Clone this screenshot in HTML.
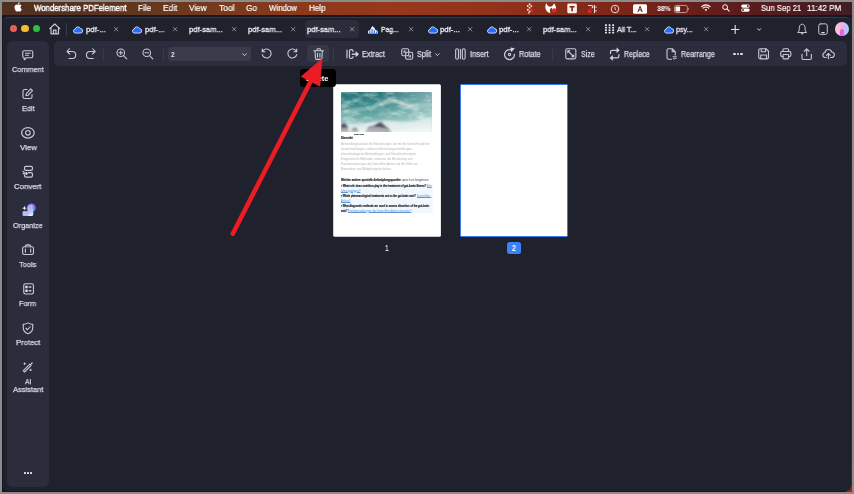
<!DOCTYPE html>
<html lang="en">
<head>
<meta charset="utf-8">
<title>Wondershare PDFelement</title>
<style>
*{box-sizing:border-box;margin:0;padding:0}
html,body{width:854px;height:494px;overflow:hidden;background:#8c8c8c;font-family:"Liberation Sans",sans-serif}
body{position:relative}
.a{position:absolute}
.t{position:absolute;will-change:transform;transform-origin:0 50%;height:12px;line-height:12px;white-space:nowrap}
svg{position:absolute;display:block;overflow:visible}
.ic{fill:none;stroke:#c8cad6;stroke-width:1.1;stroke-linecap:round;stroke-linejoin:round}
#screen{left:2px;top:1.5px;width:850px;height:490.5px;background:#151826;overflow:hidden}
#menubar{left:2px;top:1.5px;width:850px;height:13.2px;background:linear-gradient(90deg,#50301f 0%,#55311f 8%,#63361e 16%,#763a1c 25%,#8c3a1a 36%,#96391a 46%,#93341a 56%,#8c2e18 64%,#7d2518 73%,#671e1a 82%,#561b1e 90%,#481c22 96%,#421d25 100%)}
#win{left:2.8px;top:16.6px;width:848.4px;height:474.9px;background:#1f212d;border-radius:5px;border-top:1px solid #353848}
#side{left:7px;top:41px;width:42.2px;height:446px;background:#2b2d3c;border-radius:6px}
#tool{left:53.7px;top:40.8px;width:793.3px;height:25.6px;background:#2b2d3c;border-radius:5px}
.sep{position:absolute;top:47.5px;width:1px;height:13px;background:#383a49}
.x{position:absolute;width:5px;height:5px}

</style>
</head>
<body>
<div class="a" id="screen"></div>
<div class="a" id="menubar"></div>
<svg style="left:13.700px;top:2.300px" width="8" height="10.600" viewBox="0 0 15 19"><path fill="#fff" d="M10.600 0c.1 1-.3 2-1 2.800-.7.800-1.700 1.300-2.600 1.200-.1-1 .4-2 1-2.700C8.700.6 9.800.1 10.600 0zM14 6.500c-.1.100-1.800 1-1.800 3.100 0 2.500 2.200 3.300 2.300 3.400 0 .1-.4 1.200-1.100 2.400-.7 1-1.400 2-2.600 2-1.100 0-1.400-.7-2.700-.7-1.200 0-1.600.7-2.700.7-1.100 0-1.800-.9-2.600-2.100C1.800 14 1 11.500 1 9.200 1 5.900 3.100 4.200 5.200 4.200c1.100 0 2 .7 2.700.7.700 0 1.700-.8 3-.8.500 0 2.200.1 3.100 2.400z"/></svg>
<svg style="left:0;top:0" width="600" height="16" viewBox="0 0 600 16"><g fill="#f6e4de"><circle cx="529.600" cy="4.300" r=".95"/><circle cx="527.800" cy="6" r=".95"/><circle cx="531.300" cy="6" r=".95"/><circle cx="529.600" cy="7.800" r=".95"/><circle cx="527.800" cy="9.700" r=".95"/><circle cx="529.600" cy="11.500" r=".95"/><circle cx="528.800" cy="13" r=".8"/></g><circle cx="531.600" cy="10.200" r="1.500" fill="#ee2430"/><path d="M546.200 3.200C544.500 6.500 545.300 11 549 12.800L550.600 12.800C549.400 10.600 549.800 8.800 551.200 7.800 552.100 8.500 552.600 9.500 552.600 10.600L556 10C556.400 7.600 555.600 5.200 554 3.200 553.400 5 552.200 6.200 550.600 6.800 548.600 6.400 547 5.200 546.200 3.200z" fill="#fff"/><circle cx="554.300" cy="10.400" r="2.200" fill="#e8232d"/><rect x="567.300" y="3.600" width="9.600" height="9.700" rx="1.400" fill="#fbeeea"/><path d="M569.600 5.900h5v1.600h-1.700v3.800h-1.600V7.500h-1.700z" fill="#7a2616"/></svg>
<svg style="left:587.0px;top:3.5px" width="10" height="10" viewBox="0 0 10 10"><path d="M1 1.500h3.500c2 0 2 2.500 0 2.500M7.500 1v8M9 2.500v1.200M9 6v1.500" fill="none" stroke="#f3dcd6" stroke-width="1.100"/><rect x=".8" y="5.500" width="3.600" height="3.600" fill="#d62a26"/></svg>
<svg style="left:610.0px;top:3.5px" width="10" height="10" viewBox="0 0 10 10"><circle cx="5" cy="5" r="3.800" fill="none" stroke="#f0d9d2" stroke-width="1"/><path d="M5 2.800V5.200L6.200 6" fill="none" stroke="#f0d9d2" stroke-width=".9"/></svg>
<svg style="left:635.0px;top:3.5px" width="10" height="10" viewBox="0 0 10 10"><rect x="-2" y=".2" width="14" height="9.600" rx="1.500" fill="#fff"/><path d="M2.400 8 4.600 2h.9l2.200 6H6.500L6 6.600H4L3.500 8zM4.300 5.600h1.400L5 3.600z" fill="#6d2418"/></svg>
<svg style="left:674px;top:4.5px" width="16" height="8" viewBox="0 0 16 8"><rect x=".4" y=".4" width="13" height="7.200" rx="2" fill="none" stroke="#d9b5ae" stroke-width=".8"/><rect x="1.500" y="1.500" width="4.600" height="5" rx="1" fill="#fff"/><path d="M14.300 2.600c1 .3 1 2.500 0 2.800z" fill="#d9b5ae"/></svg>
<svg style="left:701.200px;top:4.400px" width="9.800" height="7.400" viewBox="0 0 12 9"><path d="M.8 3.200a7.400 7.400 0 0 1 10.400 0M2.600 5.100a4.800 4.800 0 0 1 6.800 0" fill="none" stroke="#fff" stroke-width="1.300" stroke-linecap="round"/><path d="M4.400 6.900a2.300 2.300 0 0 1 3.200 0L6 8.600z" fill="#fff"/></svg>
<svg style="left:722.300px;top:4.400px" width="7.800" height="7.800" viewBox="0 0 9 9"><circle cx="3.600" cy="3.600" r="2.800" fill="none" stroke="#fff" stroke-width="1.100"/><path d="M5.700 5.700 8.300 8.300" stroke="#fff" stroke-width="1.200" stroke-linecap="round"/></svg>
<svg style="left:741.400px;top:4.300px" width="8.800" height="8.200" viewBox="0 0 10 9"><rect x=".2" y=".3" width="9.600" height="3.700" rx="1.800" fill="#fff"/><circle cx="7.700" cy="2.150" r="1.100" fill="#7a2418"/><rect x=".2" y="4.900" width="9.600" height="3.700" rx="1.800" fill="#fff"/><circle cx="2.300" cy="6.750" r="1.100" fill="#7a2418"/></svg>
<div class="a" style="left:850.600px;top:15px;width:1.400px;height:477px;background:linear-gradient(#3a1a22,#4a1a18 60%,#6a1a10)"></div>
<div class="a" style="left:846px;top:486px;width:6px;height:6px;background:#b01c08"></div>
<div class="a" id="win"></div>
<div class="a" style="left:9.65px;top:24.90px;width:7.400px;height:7.400px;border-radius:50%;background:#ee5f58"></div>
<div class="a" style="left:21.40px;top:24.90px;width:7.400px;height:7.400px;border-radius:50%;background:#f6b92f"></div>
<div class="a" style="left:33.00px;top:24.90px;width:7.400px;height:7.400px;border-radius:50%;background:#2cc03f"></div>
<div class="a" style="left:12.5px;top:27.700px;width:1.700px;height:1.700px;border-radius:50%;background:#b3131a"></div>
<svg style="left:49.4px;top:23.2px" width="11.500" height="11.500" viewBox="0 0 23 23"><path class="ic" style="stroke-width:2.400" d="M1.400 11.200 11.500 2 21.600 11.200M4 9.200V21.600h15V9.200M9 21.600V14.200h5v7.400"/></svg>
<div class="a" style="left:66px;top:22.5px;width:1px;height:13.500px;background:#393b49"></div>
<div class="a" style="left:304.9px;top:19.7px;width:53.800px;height:18.700px;border-radius:4px;background:#2b2d3a"></div>
<svg style="left:73.4px;top:25.6px" width="9.600" height="7.600" viewBox="0 0 19 15"><path d="M5 14a4 4 0 0 1-.6-7.950A5.500 5.500 0 0 1 14.800 5 4.500 4.500 0 0 1 14.500 14z" fill="#256cf8" stroke="#e8ecff" stroke-width="1.700"/></svg>
<svg style="left:132.3px;top:25.6px" width="9.600" height="7.600" viewBox="0 0 19 15"><path d="M5 14a4 4 0 0 1-.6-7.950A5.500 5.500 0 0 1 14.800 5 4.500 4.500 0 0 1 14.500 14z" fill="#256cf8" stroke="#e8ecff" stroke-width="1.700"/></svg>
<svg style="left:427.6px;top:25.6px" width="9.600" height="7.600" viewBox="0 0 19 15"><path d="M5 14a4 4 0 0 1-.6-7.950A5.500 5.500 0 0 1 14.800 5 4.500 4.500 0 0 1 14.500 14z" fill="#256cf8" stroke="#e8ecff" stroke-width="1.700"/></svg>
<svg style="left:486.5px;top:25.6px" width="9.600" height="7.600" viewBox="0 0 19 15"><path d="M5 14a4 4 0 0 1-.6-7.950A5.500 5.500 0 0 1 14.800 5 4.500 4.500 0 0 1 14.500 14z" fill="#256cf8" stroke="#e8ecff" stroke-width="1.700"/></svg>
<svg style="left:663.7px;top:25.6px" width="9.600" height="7.600" viewBox="0 0 19 15"><path d="M5 14a4 4 0 0 1-.6-7.950A5.500 5.500 0 0 1 14.800 5 4.500 4.500 0 0 1 14.500 14z" fill="#256cf8" stroke="#e8ecff" stroke-width="1.700"/></svg>
<svg style="left:113.7px;top:27.4px" width="4.400" height="4.400" viewBox="0 0 10 10"><path d="M1 1 9 9M9 1 1 9" stroke="#a9abb9" stroke-width="1.700" stroke-linecap="round"/></svg>
<svg style="left:172.8px;top:27.4px" width="4.400" height="4.400" viewBox="0 0 10 10"><path d="M1 1 9 9M9 1 1 9" stroke="#a9abb9" stroke-width="1.700" stroke-linecap="round"/></svg>
<svg style="left:231.6px;top:27.4px" width="4.400" height="4.400" viewBox="0 0 10 10"><path d="M1 1 9 9M9 1 1 9" stroke="#a9abb9" stroke-width="1.700" stroke-linecap="round"/></svg>
<svg style="left:290.8px;top:27.4px" width="4.400" height="4.400" viewBox="0 0 10 10"><path d="M1 1 9 9M9 1 1 9" stroke="#a9abb9" stroke-width="1.700" stroke-linecap="round"/></svg>
<svg style="left:349.7px;top:27.4px" width="4.400" height="4.400" viewBox="0 0 10 10"><path d="M1 1 9 9M9 1 1 9" stroke="#a9abb9" stroke-width="1.700" stroke-linecap="round"/></svg>
<svg style="left:408.5px;top:27.4px" width="4.400" height="4.400" viewBox="0 0 10 10"><path d="M1 1 9 9M9 1 1 9" stroke="#a9abb9" stroke-width="1.700" stroke-linecap="round"/></svg>
<svg style="left:468.0px;top:27.4px" width="4.400" height="4.400" viewBox="0 0 10 10"><path d="M1 1 9 9M9 1 1 9" stroke="#a9abb9" stroke-width="1.700" stroke-linecap="round"/></svg>
<svg style="left:526.8px;top:27.4px" width="4.400" height="4.400" viewBox="0 0 10 10"><path d="M1 1 9 9M9 1 1 9" stroke="#a9abb9" stroke-width="1.700" stroke-linecap="round"/></svg>
<svg style="left:585.8px;top:27.4px" width="4.400" height="4.400" viewBox="0 0 10 10"><path d="M1 1 9 9M9 1 1 9" stroke="#a9abb9" stroke-width="1.700" stroke-linecap="round"/></svg>
<svg style="left:644.9px;top:27.4px" width="4.400" height="4.400" viewBox="0 0 10 10"><path d="M1 1 9 9M9 1 1 9" stroke="#a9abb9" stroke-width="1.700" stroke-linecap="round"/></svg>
<svg style="left:704.0px;top:27.4px" width="4.400" height="4.400" viewBox="0 0 10 10"><path d="M1 1 9 9M9 1 1 9" stroke="#a9abb9" stroke-width="1.700" stroke-linecap="round"/></svg>
<svg style="left:368.3px;top:25.5px" width="10" height="7.600" viewBox="0 0 20 15"><path d="M0 15V9.500L4 9l2-5 3-4 4 4 2 4 4 1.500 1 5.500z" fill="#eef2ff"/><path d="M2 14v-3.500h3V14zM7 14V6h2.500v8zM11.500 14V8.500H14V14zM16 14v-3h2.500v3z" fill="#3d7bf0"/></svg>
<svg style="left:0;top:0" width="854" height="60" viewBox="0 0 854 60" fill="#e4e5ec"><rect x="605.0" y="24.2" width="1.900" height="1.900" rx=".3"/><rect x="605.0" y="26.7" width="1.900" height="1.900" rx=".3"/><rect x="605.0" y="29.2" width="1.900" height="1.900" rx=".3"/><rect x="605.0" y="31.7" width="1.900" height="1.900" rx=".3"/><rect x="608.6" y="24.2" width="1.900" height="1.900" rx=".3"/><rect x="608.6" y="26.7" width="1.900" height="1.900" rx=".3"/><rect x="608.6" y="29.2" width="1.900" height="1.900" rx=".3"/><rect x="608.6" y="31.7" width="1.900" height="1.900" rx=".3"/><rect x="612.2" y="24.2" width="1.900" height="1.900" rx=".3"/><rect x="612.2" y="26.7" width="1.900" height="1.900" rx=".3"/><rect x="612.2" y="29.2" width="1.900" height="1.900" rx=".3"/><rect x="612.2" y="31.7" width="1.900" height="1.900" rx=".3"/></svg>
<svg style="left:731.4px;top:24.7px" width="8.400" height="9" viewBox="0 0 8.400 9"><path d="M4.200 0V9M0 4.500H8.400" stroke="#e4e5ec" stroke-width="1.100"/></svg>
<svg style="left:757.2px;top:27.6px" width="4.200" height="3" viewBox="0 0 4.200 3"><path d="M.3.400 2.100 2.400 3.900.4" fill="none" stroke="#c8cad6" stroke-width="1"/></svg>
<svg style="left:797px;top:23.2px" width="10.400" height="12.200" viewBox="0 0 21 24"><path class="ic" style="stroke-width:2" d="M2 18.500c2-1.500 2.500-3.500 2.500-7C4.500 5.500 6.500 2 10.500 2s6 3.500 6 9.500c0 3.500.5 5.500 2.500 7z"/><path d="M7.500 20.500h6l-3 2.700z" fill="#e1e2ea"/></svg>
<svg style="left:818px;top:23.2px" width="10" height="12.200" viewBox="0 0 20 24"><rect class="ic" style="stroke-width:2" x="1.500" y="1.500" width="17" height="21" rx="3.500"/><path d="M7.500 19h5" stroke="#e1e2ea" stroke-width="2.200" stroke-linecap="round"/></svg>
<div class="a" style="left:834.9px;top:22.2px;width:14px;height:14px;border-radius:50%;overflow:hidden;background:linear-gradient(90deg,#f6cfd4 0%,#f6b7d6 35%,#eeaef0 60%,#a9c8ff 85%,#8fe6ff 100%)"><div class="a" style="left:5px;top:7px;width:4.500px;height:8px;border-radius:2px 2px 0 0;background:#e067e8"></div><div class="a" style="left:5.800px;top:4.200px;width:3px;height:3px;border-radius:50%;background:#f0a0e8"></div></div>
<div class="a" id="side"></div>
<div class="a" id="tool"></div>
<svg style="left:22.25px;top:50.45px" width="11.5" height="10.5" viewBox="0 0 23.0 21.0"><path class="ic" style="stroke-width:2.200" d="M4.500 1.500h14a3 3 0 0 1 3 3v8a3 3 0 0 1-3 3H9l-4.500 4v-4a3 3 0 0 1-3-3v-8a3 3 0 0 1 3-3z"/><path class="ic" style="stroke-width:2.200" d="M7 6.500h9M7 10.500h6"/></svg>
<svg style="left:22.25px;top:88.25px" width="11.5" height="11.5" viewBox="0 0 23.0 23.0"><path class="ic" style="stroke-width:2.200" d="M10 3H5a3 3 0 0 0-3 3v12a3 3 0 0 0 3 3h12a3 3 0 0 0 3-3v-5"/><path class="ic" style="stroke-width:2.200" d="M17.500 1.800 21 5.300 12 14.500l-4 .7.600-4z"/></svg>
<svg style="left:0;top:0" width="60" height="150" viewBox="0 0 60 150"><ellipse class="ic" style="stroke-width:1.250" cx="27.900" cy="132.800" rx="6.300" ry="5.200"/><circle class="ic" style="stroke-width:1.100" cx="27.900" cy="132.800" r="2.300"/></svg>
<svg style="left:0;top:0" width="60" height="190" viewBox="0 0 60 190"><rect class="ic" style="stroke-width:1.200" x="24.500" y="166.400" width="8" height="4" rx="1.600"/><path class="ic" style="stroke-width:1.200" d="M28.500 172.700h2.400a1.600 1.600 0 0 1 1.600 1.600v1.300a1.600 1.600 0 0 1-1.600 1.600h-4.800a1.600 1.600 0 0 1-1.600-1.600v-.4"/><path class="ic" style="stroke-width:1.100" d="M22.900 171.200l1.400 1.500M23.200 173.600h2"/><path d="M25.600 171.600l2.600 1.900-2.600 1.900z" fill="#dfe0e8"/></svg>
<svg style="left:0;top:0" width="60" height="230" viewBox="0 0 60 230"><defs><linearGradient id="og1" x1="0" y1="0" x2="0" y2="1"><stop offset="0" stop-color="#7fa6f7"/><stop offset=".6" stop-color="#a9d2fb"/><stop offset="1" stop-color="#e6f6ff"/></linearGradient><linearGradient id="og2" x1="0" y1="0" x2="1" y2="1"><stop offset="0" stop-color="#d3bcfc"/><stop offset="1" stop-color="#b7b0fa"/></linearGradient></defs><circle cx="31.400" cy="207.800" r="4.300" fill="#8a70f4"/><path d="M27.400 207.300a2.500 2.500 0 0 1 2.500-2.500h1.600a1.800 1.800 0 0 1 1.800 1.800V214.600a1.400 1.400 0 0 1-1.400 1.400H27.400z" fill="url(#og1)"/><path d="M31.600 205.600 28.900 213.600" stroke="#dca8f4" stroke-width="1.300" stroke-linecap="round"/><rect x="22.600" y="211.300" width="6" height="4.700" rx="1" fill="url(#og2)"/><path d="M24.400 205.800l.6 1.800 1.800.6-1.800.6-.6 1.800-.6-1.800-1.800-.6 1.800-.6z" fill="#f4f6ff"/></svg>
<svg style="left:21.95px;top:243.80px" width="12.1" height="11.2" viewBox="0 0 24.2 22.4"><rect class="ic" style="stroke-width:2.200" x="1.200" y="5.600" width="21.800" height="15.400" rx="3.400"/><path class="ic" style="stroke-width:2.200;fill:#7d8092" d="M7 5.600V4.400a3 3 0 0 1 3-3h4.200a3 3 0 0 1 3 3V5.600"/><path class="ic" style="stroke-width:2.200" d="M6.800 10.200v6.400M17.400 10.200v6.400"/></svg>
<svg style="left:22.70px;top:283.10px" width="11.2" height="11.8" viewBox="0 0 22.4 23.6"><rect class="ic" style="stroke-width:2.200" x="1.500" y="1.500" width="19.400" height="20.600" rx="3.400"/><path class="ic" style="stroke-width:2.800;stroke-linecap:butt" d="M11.400 8h5.400M11.400 15.600h5.400"/><rect x="4.600" y="5.600" width="4.800" height="4.800" rx=".6" fill="#dfe0e8"/><rect x="4.600" y="13.200" width="4.800" height="4.800" rx=".6" fill="#dfe0e8"/></svg>
<svg style="left:22.00px;top:321.70px" width="12" height="12.6" viewBox="0 0 24 25.2"><path class="ic" style="stroke-width:2.200" d="M12 1.700c3 2 6 2.800 9.500 3v6.800c0 6-4 10-9.500 12-5.500-2-9.500-6-9.500-12V4.700c3.500-.2 6.500-1 9.500-3z"/><path class="ic" style="stroke-width:2.200" d="M8 12.500l3 3 5.500-6"/></svg>
<svg style="left:21.90px;top:361.00px" width="11.6" height="11.4" viewBox="0 0 23.2 22.8"><path class="ic" style="stroke-width:2.200" d="M2.600 19.400 15.800 6.200l2.600 2.600L5.200 22z"/><path class="ic" style="stroke-width:2.600" d="M18.600 5.600 20.400 3.800"/><path d="M5.400 2.200l.9 2.400 2.400.9-2.400.9-.9 2.400-.9-2.400-2.400-.9 2.400-.9zM17.400 14.600l.9 2.400 2.400.9-2.400.9-.9 2.400-.9-2.400-2.400-.9 2.400-.9z" fill="#dfe0e8"/></svg>
<div class="a" style="left:23.6px;top:472.2px;width:2px;height:2px;border-radius:.6px;background:#e1e2ea"></div>
<div class="a" style="left:27.0px;top:472.2px;width:2px;height:2px;border-radius:.6px;background:#e1e2ea"></div>
<div class="a" style="left:30.4px;top:472.2px;width:2px;height:2px;border-radius:.6px;background:#e1e2ea"></div>
<svg style="left:66.00px;top:48.20px" width="10.2" height="11.4" viewBox="0 0 20.4 22.8"><path class="ic" style="stroke-width:2.200" d="M7 1.500 2 7l5.500 5M2.500 7h10a6.500 6.500 0 0 1 0 14H6"/></svg>
<svg style="left:86.00px;top:48.20px" width="10.2" height="11.4" viewBox="0 0 20.4 22.8"><path class="ic" style="stroke-width:2.200" d="M13.400 1.500 18.400 7l-5.500 5M17.900 7h-10a6.500 6.500 0 0 0 0 14h6.500"/></svg>
<div class="sep" style="left:103.3px"></div>
<svg style="left:115.60px;top:48.00px" width="11.4" height="11.6" viewBox="0 0 22.8 23.2"><circle class="ic" style="stroke-width:2.200" cx="9.500" cy="9.500" r="7.600"/><path class="ic" style="stroke-width:2.200" d="M15.200 15.200 21.500 21.800M6 9.500h7M9.500 6v7"/></svg>
<svg style="left:141.80px;top:48.00px" width="11.4" height="11.6" viewBox="0 0 22.8 23.2"><circle class="ic" style="stroke-width:2.200" cx="9.500" cy="9.500" r="7.600"/><path class="ic" style="stroke-width:2.200" d="M15.200 15.200 21.500 21.800M6 9.500h7"/></svg>
<div class="sep" style="left:163.3px"></div>
<div class="a" style="left:168px;top:46.6px;width:83px;height:14.800px;border-radius:3px;background:#3a3c4a"></div>
<svg style="left:241.8px;top:52.5px" width="5" height="3.400" viewBox="0 0 5 3.400"><path d="M.4.500 2.500 2.700 4.600.5" fill="none" stroke="#c8cad6" stroke-width="1"/></svg>
<svg style="left:260.80px;top:48.00px" width="11" height="11.4" viewBox="0 0 22 22.8"><path class="ic" style="stroke-width:2.200" d="M3.500 6.500A9 9 0 1 1 2.500 13M2.500 2v5.500h5.500"/></svg>
<svg style="left:286.70px;top:48.00px" width="11" height="11.4" viewBox="0 0 22 22.8"><path class="ic" style="stroke-width:2.200" d="M18.500 6.500A9 9 0 1 0 19.500 13M19.500 2v5.500H14"/></svg>
<div class="a" style="left:307.4px;top:44.6px;width:21.400px;height:17.600px;border-radius:4px;background:#363847"></div>
<svg style="left:312.60px;top:47.80px" width="11.4" height="12.2" viewBox="0 0 22.8 24.4"><path class="ic" style="stroke-width:2.200" d="M1.500 5.500h19.800M8 5V3a1.500 1.500 0 0 1 1.500-1.500h3.800A1.500 1.500 0 0 1 14.800 3v2M4 6l1 14.500a2.500 2.500 0 0 0 2.500 2.300h7.800a2.500 2.500 0 0 0 2.500-2.300L18.800 6M9 10.500v7.500M13.800 10.500v7.500"/></svg>
<div class="sep" style="left:333.3px"></div>
<svg style="left:0;top:0" width="400" height="70" viewBox="0 0 400 70"><path class="ic" style="stroke-width:1.200" d="M347 50.200v7.600M353 51.400v-.3a1.500 1.500 0 0 0-1.500-1.500h-.5a1.500 1.500 0 0 0-1.500 1.500v5.800a1.500 1.500 0 0 0 1.500 1.500h.5a1.500 1.500 0 0 0 1.500-1.500v-.3"/><path d="M351.800 54.200h4.400" stroke="#c8cad6" stroke-width="1.500"/><path d="M355.600 51.100 359 54.200 355.600 57.300z" fill="#d4d6e0"/></svg>
<svg style="left:400.60px;top:48.00px" width="12.4" height="12" viewBox="0 0 24.8 24"><rect class="ic" style="stroke-width:2.200" x="1.500" y="1.500" width="14" height="14" rx="3"/><rect class="ic" style="stroke-width:2.200" x="9.300" y="8.500" width="14" height="14" rx="3"/><path class="ic" style="stroke-width:1.800" d="M6 6l4 4M6 9.500V6h3.500M19 18l-4-4M19 14.500V18h-3.500"/></svg>
<svg style="left:435px;top:52.6px" width="4.800" height="3.200" viewBox="0 0 4.800 3.200"><path d="M.4.500 2.400 2.600 4.400.5" fill="none" stroke="#c8cad6" stroke-width="1"/></svg>
<svg style="left:454.60px;top:48.00px" width="10.8" height="12" viewBox="0 0 21.6 24"><rect class="ic" style="stroke-width:2.200" x="1.300" y="1.500" width="5.600" height="21" rx="2.800"/><path class="ic" style="stroke-width:2.200" d="M10.800 2.500v19"/><rect class="ic" style="stroke-width:2.200" x="14.700" y="1.500" width="5.600" height="21" rx="2.800"/></svg>
<svg style="left:0;top:0" width="560" height="70" viewBox="0 0 560 70"><path class="ic" style="stroke-width:1.300" d="M511.600 50.200A4.900 4.900 0 1 0 514.400 54.400"/><path d="M510.400 47.400 514.800 48.300 511.300 52.200z" fill="#d4d6e0"/><circle class="ic" style="stroke-width:1.200" cx="509.500" cy="54.600" r="1.150"/></svg>
<div class="sep" style="left:552.3px"></div>
<svg style="left:564.80px;top:48.20px" width="11.6" height="11.6" viewBox="0 0 23.2 23.2"><rect class="ic" style="stroke-width:2.200" x="1.500" y="1.500" width="20.200" height="20.200" rx="3.200"/><path class="ic" style="stroke-width:2.200" d="M7 7l9 9"/><path d="M4.600 4.600h6.600l-6.600 6.600zM18.600 18.600h-6.600l6.600-6.600z" fill="#d4d6e0"/></svg>
<svg style="left:0;top:0" width="640" height="70" viewBox="0 0 640 70"><path class="ic" style="stroke-width:1.250" d="M610.500 53.600v-1.600a1.700 1.700 0 0 1 1.700-1.700h4.800M618.900 54.600v1.600a1.700 1.700 0 0 1-1.700 1.700h-4.800"/><path d="M616.600 47.400 619.700 50.300 616.600 53.200zM612.800 55 609.700 57.900 612.800 60.800z" fill="#d4d6e0"/></svg>
<svg style="left:666.20px;top:48.00px" width="11" height="12.2" viewBox="0 0 22 24.4"><path class="ic" style="stroke-width:2.200" d="M11 22.500H5a3 3 0 0 1-3-3v-15a3 3 0 0 1 3-3h7.500l6 6v6M12.500 1.500v6h6"/><path class="ic" style="stroke-width:1.800" d="M14 17.500h6.500l-2-2M21 20.500h-6.500l2 2"/></svg>
<div class="a" style="left:733.2px;top:52.7px;width:2.400px;height:2.400px;border-radius:50%;background:#dfe0e8"></div>
<div class="a" style="left:736.8px;top:52.7px;width:2.400px;height:2.400px;border-radius:50%;background:#dfe0e8"></div>
<div class="a" style="left:740.4px;top:52.7px;width:2.400px;height:2.400px;border-radius:50%;background:#dfe0e8"></div>
<svg style="left:758.40px;top:48.20px" width="11.2" height="11.6" viewBox="0 0 22.4 23.2"><path class="ic" style="stroke-width:2.200" d="M4.500 1.500H16l5 5v12.700a2.500 2.500 0 0 1-2.500 2.500h-14A3 3 0 0 1 1.500 18.700V4.500a3 3 0 0 1 3-3zM6.500 1.500v6h8.500v-6M5.500 21.500v-7.500h11.500v7.500"/></svg>
<svg style="left:779.60px;top:48.20px" width="11.6" height="11.6" viewBox="0 0 23.2 23.2"><path class="ic" style="stroke-width:2.200" d="M6 7V3.500a2 2 0 0 1 2-2h7.200a2 2 0 0 1 2 2V7M6 17H4a2.500 2.500 0 0 1-2.500-2.500v-5A2.500 2.500 0 0 1 4 7h15.200a2.500 2.500 0 0 1 2.500 2.500v5a2.500 2.500 0 0 1-2.500 2.500h-2"/><rect class="ic" style="stroke-width:2.200" x="6" y="13" width="11.200" height="8.700" rx="1.500"/></svg>
<svg style="left:800.80px;top:47.60px" width="11.4" height="12.4" viewBox="0 0 22.8 24.8"><path class="ic" style="stroke-width:2.200" d="M2 12.500v8a2.500 2.500 0 0 0 2.500 2.500h13.800a2.500 2.500 0 0 0 2.500-2.500v-8M11.400 15.500V2M6.500 6.500 11.400 1.700l4.900 4.800"/></svg>
<svg style="left:821.60px;top:48.40px" width="12.8" height="11.4" viewBox="0 0 25.6 22.8"><path class="ic" style="stroke-width:2.200" d="M8.500 19H6.500A5 5 0 0 1 5.800 9.100 7 7 0 0 1 19.400 8 5.500 5.500 0 0 1 19 19h-2M12.800 21.500V11.500M9 14.800l3.800-3.800 3.800 3.800"/></svg>
<svg style="left:0;top:0" width="460" height="240" viewBox="0 0 460 240"><rect x="333.200" y="84.350" width="107.700" height="152.500" rx="1.500" fill="#fff"/><rect x="340.500" y="183.600" width="92" height="29.500" fill="#f2f7fd"/></svg>
<svg style="left:341.200px;top:92.200px" width="91.100" height="39.900" viewBox="0 0 91.100 39.900">
<defs>
<linearGradient id="sea" x1="0" y1="0" x2="0" y2="1"><stop offset="0" stop-color="#226f75"/><stop offset=".3" stop-color="#388888"/><stop offset=".6" stop-color="#66a9a6"/><stop offset=".82" stop-color="#9ac6c2"/><stop offset="1" stop-color="#c4dad8"/></linearGradient>
<linearGradient id="seaR" x1="0" y1="0" x2="1" y2="0"><stop offset="0" stop-color="#fff" stop-opacity="0"/><stop offset=".45" stop-color="#fff" stop-opacity=".05"/><stop offset="1" stop-color="#fff" stop-opacity=".42"/></linearGradient>
<filter id="foam" x="0" y="0" width="100%" height="100%"><feTurbulence type="fractalNoise" baseFrequency=".07 .16" numOctaves="3" seed="7"/><feColorMatrix type="matrix" values="0 0 0 0 1  0 0 0 0 1  0 0 0 0 1  2.600 0 0 0 -1.150"/></filter>
<filter id="blur1"><feGaussianBlur stdDeviation=".8"/></filter>
<clipPath id="seac"><rect width="91.100" height="39.900" rx="1.200"/></clipPath>
</defs>
<g clip-path="url(#seac)">
<rect width="91.100" height="39.900" fill="url(#sea)"/>
<rect width="91.100" height="39.900" fill="url(#seaR)"/>
<path d="M-2 22c10-6 20-3 30-6s18-8 30-6 20 6 35 2" stroke="#d5e6e3" stroke-width="3" fill="none" opacity=".4" filter="url(#blur1)"/>
<path d="M40 14c5-5 12-7 19-4s11 8 19 6" stroke="#e6dcd2" stroke-width="3" fill="none" opacity=".5" filter="url(#blur1)"/>
<rect width="91.100" height="39.900" filter="url(#foam)" opacity=".5"/>
<path d="M0 32c8-2 16 1 26-1s18-4 28-2 22 0 37-4v20H0z" fill="#f1f6f5" opacity=".7" filter="url(#blur1)"/>
<path d="M0 33l2-2 3 1 2 4 1 4H0zM9 40l2-3 4-1 3 4zM24 40l4-5 5-1 4-3 3-1 4 4 4 3 3 4z" fill="#3a3c50" opacity=".88" filter="url(#blur1)"/>
<path d="M0 36c6-2 12 2 20 1s10-3 18-2 14 3 22 2 20-2 31-1v5H0z" fill="#f5f8f7" opacity=".55" filter="url(#blur1)"/>
</g>
</svg>
<div class="a" style="left:460px;top:84px;width:108px;height:153px;background:#fff;border:1.200px solid #3b7cf0;border-radius:1.500px"></div>
<div class="a" style="left:507px;top:241.600px;width:13.500px;height:12px;background:#3b82f6;border-radius:2.500px"></div>

<!-- text labels -->
<div class="t" style="left:33.50px;top:2.40px;font-size:8.7px;font-weight:normal;color:#fff;transform:scaleX(0.9007);-webkit-text-stroke:.45px #fff;">Wondershare PDFelement</div>
<div class="t" style="left:138.00px;top:2.40px;font-size:8.7px;font-weight:normal;color:#fff;transform:scaleX(0.9286);-webkit-text-stroke:.18px #fff;">File</div>
<div class="t" style="left:163.00px;top:2.40px;font-size:8.7px;font-weight:normal;color:#fff;transform:scaleX(0.9677);-webkit-text-stroke:.18px #fff;">Edit</div>
<div class="t" style="left:189.00px;top:2.40px;font-size:8.7px;font-weight:normal;color:#fff;transform:scaleX(0.9365);-webkit-text-stroke:.18px #fff;">View</div>
<div class="t" style="left:218.50px;top:2.40px;font-size:8.7px;font-weight:normal;color:#fff;transform:scaleX(0.9725);-webkit-text-stroke:.18px #fff;">Tool</div>
<div class="t" style="left:245.50px;top:2.40px;font-size:8.7px;font-weight:normal;color:#fff;transform:scaleX(0.9488);-webkit-text-stroke:.18px #fff;">Go</div>
<div class="t" style="left:269.00px;top:2.40px;font-size:8.7px;font-weight:normal;color:#fff;transform:scaleX(0.9060);-webkit-text-stroke:.18px #fff;">Window</div>
<div class="t" style="left:308.50px;top:2.40px;font-size:8.7px;font-weight:normal;color:#fff;transform:scaleX(0.9231);-webkit-text-stroke:.18px #fff;">Help</div>
<div class="t" style="left:657.20px;top:3.40px;font-size:7.3px;font-weight:bold;color:#fff;transform:scaleX(0.9446);">38%</div>
<div class="t" style="left:760.90px;top:2.40px;font-size:8.7px;font-weight:normal;color:#fff;transform:scaleX(0.8875);-webkit-text-stroke:.18px #fff;">Sun Sep 21</div>
<div class="t" style="left:806.70px;top:2.40px;font-size:8.7px;font-weight:normal;color:#fff;transform:scaleX(0.9385);-webkit-text-stroke:.18px #fff;">11:42 PM</div>
<div class="t" style="left:85.70px;top:23.60px;font-size:7.8px;font-weight:normal;color:#e6e7ee;transform:scaleX(0.9831);-webkit-text-stroke:.32px #e6e7ee;">pdf-...</div>
<div class="t" style="left:144.60px;top:23.60px;font-size:7.8px;font-weight:normal;color:#e6e7ee;transform:scaleX(0.9730);-webkit-text-stroke:.32px #e6e7ee;">pdf-...</div>
<div class="t" style="left:189.20px;top:23.60px;font-size:7.8px;font-weight:normal;color:#e6e7ee;transform:scaleX(0.9749);-webkit-text-stroke:.32px #e6e7ee;">pdf-sam...</div>
<div class="t" style="left:248.00px;top:23.60px;font-size:7.8px;font-weight:normal;color:#e6e7ee;transform:scaleX(0.9806);-webkit-text-stroke:.32px #e6e7ee;">pdf-sam...</div>
<div class="t" style="left:307.30px;top:23.60px;font-size:7.8px;font-weight:normal;color:#e6e7ee;transform:scaleX(0.9691);-webkit-text-stroke:.32px #e6e7ee;">pdf-sam...</div>
<div class="t" style="left:381.00px;top:23.60px;font-size:7.8px;font-weight:normal;color:#e6e7ee;transform:scaleX(0.8687);-webkit-text-stroke:.32px #e6e7ee;">Pag...</div>
<div class="t" style="left:439.60px;top:23.60px;font-size:7.8px;font-weight:normal;color:#e6e7ee;transform:scaleX(0.9931);-webkit-text-stroke:.32px #e6e7ee;">pdf-...</div>
<div class="t" style="left:498.50px;top:23.60px;font-size:7.8px;font-weight:normal;color:#e6e7ee;transform:scaleX(0.9931);-webkit-text-stroke:.32px #e6e7ee;">pdf-...</div>
<div class="t" style="left:543.40px;top:23.60px;font-size:7.8px;font-weight:normal;color:#e6e7ee;transform:scaleX(0.9749);-webkit-text-stroke:.32px #e6e7ee;">pdf-sam...</div>
<div class="t" style="left:617.00px;top:23.60px;font-size:7.8px;font-weight:normal;color:#e6e7ee;transform:scaleX(0.9150);-webkit-text-stroke:.32px #e6e7ee;">All T...</div>
<div class="t" style="left:675.80px;top:23.60px;font-size:7.8px;font-weight:normal;color:#e6e7ee;transform:scaleX(0.9080);-webkit-text-stroke:.32px #e6e7ee;">psy...</div>
<div class="t" style="left:11.70px;top:63.90px;font-size:8.0px;font-weight:normal;color:#dcdde6;transform:scaleX(0.9168);-webkit-text-stroke:.25px #dcdde6;">Comment</div>
<div class="t" style="left:21.60px;top:102.90px;font-size:8.0px;font-weight:normal;color:#dcdde6;transform:scaleX(0.9277);-webkit-text-stroke:.25px #dcdde6;">Edit</div>
<div class="t" style="left:19.50px;top:141.90px;font-size:8.0px;font-weight:normal;color:#dcdde6;transform:scaleX(0.9766);-webkit-text-stroke:.25px #dcdde6;">View</div>
<div class="t" style="left:14.20px;top:180.90px;font-size:8.0px;font-weight:normal;color:#dcdde6;transform:scaleX(0.9780);-webkit-text-stroke:.25px #dcdde6;">Convert</div>
<div class="t" style="left:12.80px;top:219.90px;font-size:8.0px;font-weight:normal;color:#dcdde6;transform:scaleX(0.9147);-webkit-text-stroke:.25px #dcdde6;">Organize</div>
<div class="t" style="left:19.30px;top:258.90px;font-size:8.0px;font-weight:normal;color:#dcdde6;transform:scaleX(0.9258);-webkit-text-stroke:.25px #dcdde6;">Tools</div>
<div class="t" style="left:19.30px;top:297.90px;font-size:8.0px;font-weight:normal;color:#dcdde6;transform:scaleX(0.9158);-webkit-text-stroke:.25px #dcdde6;">Form</div>
<div class="t" style="left:15.60px;top:336.90px;font-size:8.0px;font-weight:normal;color:#dcdde6;transform:scaleX(0.9628);-webkit-text-stroke:.25px #dcdde6;">Protect</div>
<div class="t" style="left:24.60px;top:375.80px;font-size:8.0px;font-weight:normal;color:#dcdde6;transform:scaleX(0.8463);-webkit-text-stroke:.25px #dcdde6;">AI</div>
<div class="t" style="left:12.60px;top:384.40px;font-size:8.0px;font-weight:normal;color:#dcdde6;transform:scaleX(0.9363);-webkit-text-stroke:.25px #dcdde6;">Assistant</div>
<div class="t" style="left:362.40px;top:48.40px;font-size:8.4px;font-weight:normal;color:#dcdde6;transform:scaleX(0.8748);-webkit-text-stroke:.25px #dcdde6;">Extract</div>
<div class="t" style="left:417.20px;top:48.40px;font-size:8.4px;font-weight:normal;color:#dcdde6;transform:scaleX(0.8591);-webkit-text-stroke:.25px #dcdde6;">Split</div>
<div class="t" style="left:470.00px;top:48.40px;font-size:8.4px;font-weight:normal;color:#dcdde6;transform:scaleX(0.8925);-webkit-text-stroke:.25px #dcdde6;">Insert</div>
<div class="t" style="left:518.70px;top:48.40px;font-size:8.4px;font-weight:normal;color:#dcdde6;transform:scaleX(0.8749);-webkit-text-stroke:.25px #dcdde6;">Rotate</div>
<div class="t" style="left:580.60px;top:48.40px;font-size:8.4px;font-weight:normal;color:#dcdde6;transform:scaleX(0.8345);-webkit-text-stroke:.25px #dcdde6;">Size</div>
<div class="t" style="left:624.40px;top:48.40px;font-size:8.4px;font-weight:normal;color:#dcdde6;transform:scaleX(0.8329);-webkit-text-stroke:.25px #dcdde6;">Replace</div>
<div class="t" style="left:680.90px;top:48.40px;font-size:8.4px;font-weight:normal;color:#dcdde6;transform:scaleX(0.8540);-webkit-text-stroke:.25px #dcdde6;">Rearrange</div>
<div class="t" style="left:171.20px;top:48.60px;font-size:6.6px;font-weight:bold;color:#e4e5ec;transform:scaleX(0.9532);">2</div>
<div class="t" style="left:384.80px;top:241.60px;font-size:8.6px;font-weight:normal;color:#e4e5ec;transform:scaleX(0.8000);-webkit-text-stroke:.2px #e4e5ec;">1</div>
<div class="t" style="left:511.90px;top:241.70px;font-size:8.4px;font-weight:bold;color:#fff;transform:scaleX(0.8562);">2</div>
<div class="t" style="left:354.00px;top:127.80px;font-size:2.2px;font-weight:bold;color:#333;transform:scaleX(1.1500);-webkit-text-stroke:.12px #333;">2021 file</div>
<div class="t" style="left:341.30px;top:131.80px;font-size:3.1px;font-weight:bold;color:#222;transform:scaleX(0.8333);-webkit-text-stroke:.12px #222;">Übersicht</div>
<div class="t" style="left:341.30px;top:137.80px;font-size:3.1px;font-weight:normal;color:#b3b5b8;transform:scaleX(0.9343);">Behandlungsansätze bei Erkrankungen, die mit der Darm-Hirn-Achse</div>
<div class="t" style="left:341.30px;top:142.80px;font-size:3.1px;font-weight:normal;color:#b3b5b8;transform:scaleX(0.9348);">zusammenhängen, umfassen Ernährungsumstellungen,</div>
<div class="t" style="left:341.30px;top:147.70px;font-size:3.1px;font-weight:normal;color:#b3b5b8;transform:scaleX(0.9373);">pharmakologische Behandlungen und Verhaltenstherapien.</div>
<div class="t" style="left:341.30px;top:152.70px;font-size:3.1px;font-weight:normal;color:#b3b5b8;transform:scaleX(0.9449);">Diagnostische Methoden umfassen die Beurteilung von</div>
<div class="t" style="left:341.30px;top:157.60px;font-size:3.1px;font-weight:normal;color:#b3b5b8;transform:scaleX(0.9387);">Funktionsstörungen der Darm-Hirn-Achse und die Rolle von</div>
<div class="t" style="left:341.30px;top:162.50px;font-size:3.1px;font-weight:normal;color:#b3b5b8;transform:scaleX(0.9416);">Biomarkern und Bildgebungstechniken.</div>
<div class="t" style="left:341.30px;top:173.90px;font-size:3.1px;font-weight:bold;color:#15161a;transform:scaleX(0.8996);-webkit-text-stroke:.12px #15161a;">Welche andere spezielle Anknüpfungspunkte</div>
<div class="t" style="left:402.00px;top:173.90px;font-size:3.1px;font-weight:normal;color:#444;transform:scaleX(1.0160);">sprich es beginnen</div>
<div class="t" style="left:341.30px;top:180.30px;font-size:3.1px;font-weight:bold;color:#15161a;transform:scaleX(0.8601);-webkit-text-stroke:.12px #15161a;">• What role does nutrition play in the treatment of gut-brain illness?</div>
<div class="t" style="left:427.00px;top:180.30px;font-size:3.1px;font-weight:normal;color:#5a97d4;transform:scaleX(0.9528);text-decoration:underline;text-decoration-thickness:.3px;text-underline-offset:.3px;">Ern</div>
<div class="t" style="left:341.30px;top:185.00px;font-size:3.1px;font-weight:normal;color:#5a97d4;transform:scaleX(0.9929);text-decoration:underline;text-decoration-thickness:.3px;text-underline-offset:.3px;">ährungstipps?</div>
<div class="t" style="left:341.30px;top:190.10px;font-size:3.1px;font-weight:bold;color:#15161a;transform:scaleX(0.8132);-webkit-text-stroke:.12px #15161a;">• Which pharmacological treatments act on the gut-brain axis?</div>
<div class="t" style="left:416.60px;top:190.10px;font-size:3.1px;font-weight:normal;color:#5a97d4;transform:scaleX(0.9087);text-decoration:underline;text-decoration-thickness:.3px;text-underline-offset:.3px;">Darm-Hirn-</div>
<div class="t" style="left:341.30px;top:195.10px;font-size:3.1px;font-weight:normal;color:#5a97d4;transform:scaleX(0.9392);text-decoration:underline;text-decoration-thickness:.3px;text-underline-offset:.3px;">Achse?</div>
<div class="t" style="left:341.30px;top:199.80px;font-size:3.1px;font-weight:bold;color:#15161a;transform:scaleX(0.8252);-webkit-text-stroke:.12px #15161a;">• What diagnostic methods are used to assess disorders of the gut-brain</div>
<div class="t" style="left:341.30px;top:204.70px;font-size:3.1px;font-weight:bold;color:#15161a;transform:scaleX(0.8000);-webkit-text-stroke:.12px #15161a;">axis?</div>
<div class="t" style="left:347.60px;top:204.70px;font-size:3.1px;font-weight:normal;color:#5a97d4;transform:scaleX(0.8715);text-decoration:underline;text-decoration-thickness:.3px;text-underline-offset:.3px;">Funktionsstörungen der Darm-Hirn-Achse erkennen?</div>
<!-- overlay -->
<div class="a" style="left:300px;top:69px;width:36px;height:18px;border-radius:3.500px;background:#000"></div>
<div class="t" style="left:305.700px;top:73.300px;font-size:7.500px;font-weight:bold;color:#fff">Delete</div>
<svg style="left:0;top:0" width="854" height="494" viewBox="0 0 854 494"><path d="M232.800 233.700 310.800 81" stroke="#ec1c24" stroke-width="4.600" stroke-linecap="round" fill="none"/><path d="M322 58.700 301.100 76.600 319.900 86.300z" fill="#ec1c24" stroke="#ec1c24" stroke-width=".6" stroke-linejoin="round"/></svg>

</body>
</html>
